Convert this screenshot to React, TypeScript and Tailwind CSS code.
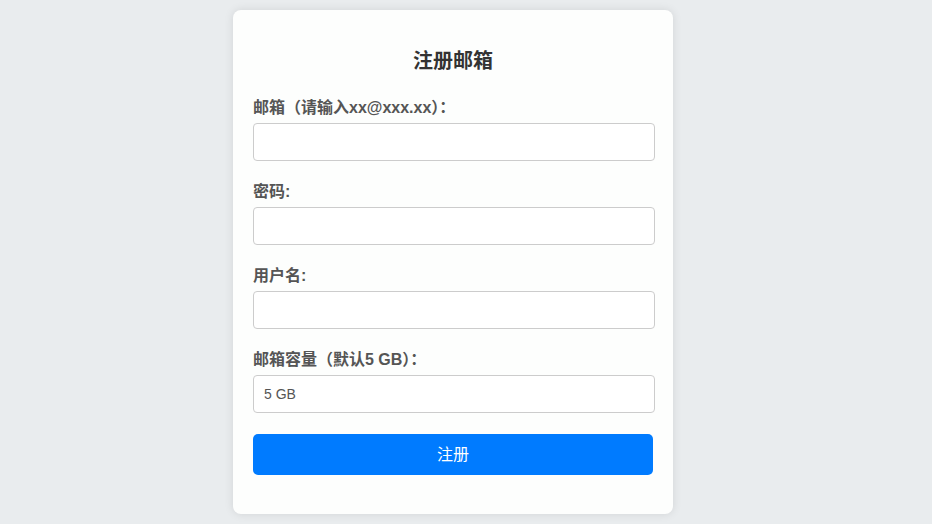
export default function App() {
  const fields = [
    { label: "邮箱（请输入xx@xxx.xx）：", type: "email", value: "" },
    { label: "密码:", type: "password", value: "" },
    { label: "用户名:", type: "text", value: "" },
    { label: "邮箱容量（默认5 GB）：", type: "text", value: "5 GB" },
  ];

  return (
    <div
      className="min-h-screen bg-[#e9ecee] flex justify-center pt-[10px] pr-[26px]"
      style={{ fontFamily: '"Liberation Sans", "Noto Sans CJK SC", sans-serif' }}
    >
      <div className="w-[440px] h-[504px] bg-[#fdfefd] rounded-lg shadow-[0_0_10px_rgba(0,0,0,0.1)] px-5 pt-[39px]">
        <h2 className="text-center text-[20px] leading-6 font-bold text-[#333]">注册邮箱</h2>
        <form className="mt-[25px] flex flex-col">
          {fields.map((f) => (
            <div key={f.label} className="flex flex-col gap-[5px] mb-[21px] last:mb-[19px]">
              <label className="text-[16px] leading-5 font-bold text-[#555]">{f.label}</label>
              <input
                type={f.type}
                defaultValue={f.value}
                className="w-[402px] h-[38px] bg-white border border-[#ccc] rounded px-[10px] text-[14px] text-[#555] outline-none"
              />
            </div>
          ))}
          <button
            type="button"
            className="w-[400px] h-[41px] bg-[#007bff] text-white text-[16px] rounded-[5px]"
          >
            注册
          </button>
        </form>
      </div>
    </div>
  );
}
